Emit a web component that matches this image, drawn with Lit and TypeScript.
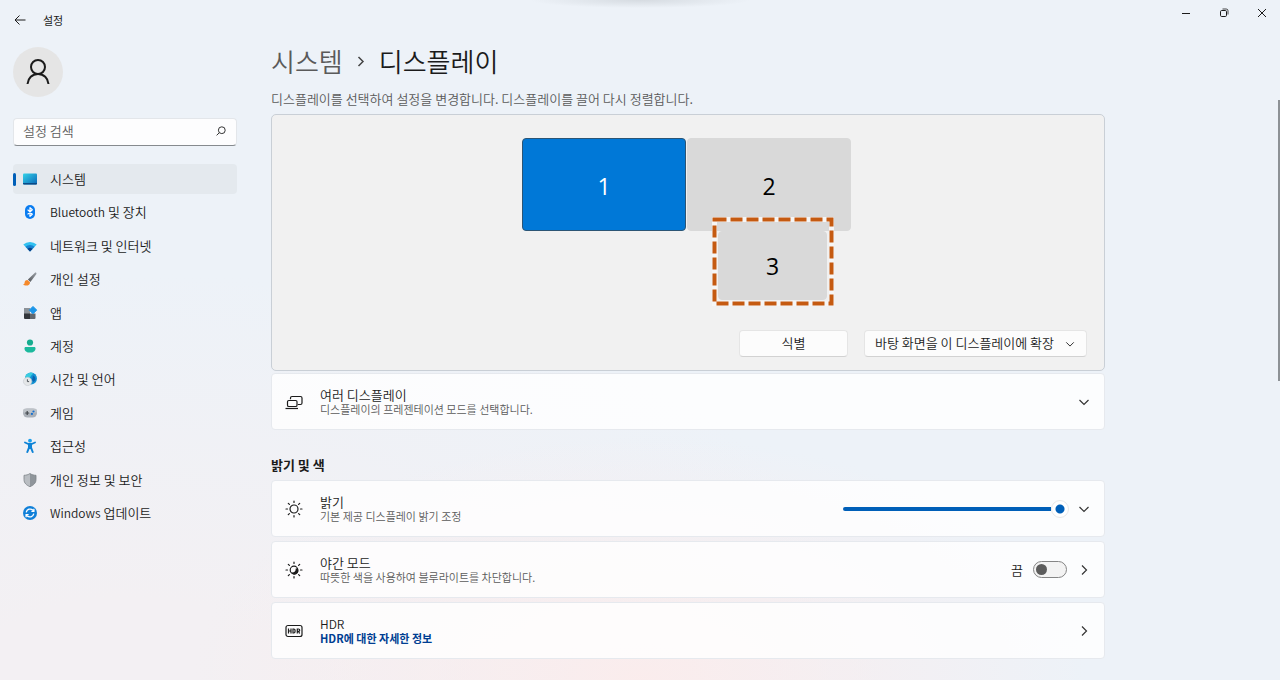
import { LitElement, html, svg, css } from "lit";
import { customElement, property, state } from "lit/decorators.js";
import { classMap } from "lit/directives/class-map.js";

const icons: Record<string, unknown> = {
  system: svg`<defs><linearGradient id="g" x1="0" y1="0" x2="1" y2="1"><stop offset="0" stop-color="#35d3e8"/><stop offset="1" stop-color="#0a66b8"/></linearGradient></defs>
    <rect x="1" y="2.5" width="14" height="11" rx="1" fill="url(#g)"/><path d="M1 12h14v.5a1 1 0 0 1-1 1H2a1 1 0 0 1-1-1z" fill="#0b4a86"/>`,
  bluetooth: svg`<rect x="3" y="1" width="10" height="14" rx="5" fill="#0a7cf0"/>
    <path d="M5.6 5.6 10.3 10.2 8 12.4V3.6l2.3 2.2L5.6 10.4" fill="none" stroke="#fff" stroke-width="1.2" stroke-linejoin="round"/>`,
  network: svg`<path d="M8 13.6 1.3 6.6a9.6 9.6 0 0 1 13.4 0z" fill="#32c1f0"/>
    <path d="M8 13.6 3.4 8.8a6.6 6.6 0 0 1 9.2 0z" fill="#1783d1"/><path d="M8 13.6 5.5 11a3.6 3.6 0 0 1 5 0z" fill="#0a3f86"/>`,
  personal: svg`<defs><linearGradient id="g" x1="1" y1="0" x2="0" y2="1"><stop offset="0" stop-color="#9aa0a6"/><stop offset="1" stop-color="#55585c"/></linearGradient></defs>
    <path d="M14.2 1.8c.5.5.3 1-.1 1.6L8.4 10.9 5.9 8.6 12.7 2c.5-.5 1.1-.6 1.5-.2z" fill="url(#g)"/>
    <path d="M5.4 8.9 8 11.2c.2 2.1-1.7 3.4-3.6 3.4-1.4 0-2.6-.3-3.4-1 1.5-.3 1.4-1.3 1.7-2.6.3-1.3 1.4-2.2 2.700-2.100z" fill="#f5892a"/>`,
  apps: svg`<path d="M2 3h6v6H2z" fill="#8c9298"/><path d="M2 8.500h6V14H3a1 1 0 0 1-1-1z" fill="#32363b"/>
    <path d="M8 8.500h5.500V13a1 1 0 0 1-1 1H8z" fill="#62676d"/><path d="m11 1.400 3.700 3.700L11 8.800 7.300 5.100z" fill="#1b95e8" stroke="#1b95e8" stroke-linejoin="round"/>`,
  account: svg`<circle cx="8" cy="4.500" r="3.100" fill="#16ac8f"/><path d="M2.500 10.400c0-.9.6-1.400 1.400-1.400h8.200c.8 0 1.400.5 1.400 1.400 0 2.500-2.300 4.200-5.500 4.200s-5.500-1.700-5.500-4.200z" fill="#1bb99d"/>`,
  time: svg`<circle cx="9" cy="7.500" r="6" fill="#1492d2"/><path d="M5 3a6 6 0 0 1 6-1.100c-.2 2-2.400 2.200-2.600 4L5.500 8 3 7c.1-1.800.8-3.100 2-4z" fill="#38cbe0"/>
    <path d="M11 4.500l2 1.500.500 3-2 2-1.500-2z" fill="#0a62b0"/>
    <circle cx="5.600" cy="10.400" r="4.200" fill="#e4e6e8" stroke="#bfc5ca" stroke-width=".5"/><path d="M5.400 8.300v2.300h1.700" fill="none" stroke="#50565c"/>`,
  game: svg`<rect x="1" y="3.500" width="14" height="9" rx="4.500" fill="#aab0b8"/><rect x="1" y="3.500" width="14" height="4.500" rx="3" fill="#bdc2c8"/>
    <path d="M5.200 6v4M3.200 8h4" stroke="#41464c" stroke-width="1.200"/><circle cx="11.500" cy="6.500" r="1.100" fill="#1670d0"/><circle cx="9.900" cy="8.900" r="1.100" fill="#1670d0"/>`,
  access: svg`<g fill="none" stroke="#0f83d6" stroke-linecap="round" stroke-linejoin="round"><path d="M3 4.500 6.300 6h3.400L13 4.500" stroke-width="1.900"/><path d="M7 6.500v3.200L5.300 14M9 6.500v3.200l1.700 4.300M8 6.500v3.500" stroke-width="2"/></g><circle cx="8" cy="2.700" r="1.900" fill="#1aa0ee"/>`,
  privacy: svg`<path d="M8 1.500c1.900 1.300 3.700 1.700 6 1.800v4.200c0 3.500-2.400 5.700-6 7.200z" fill="#8f959b"/><path d="M8 1.500C6.100 2.800 4.300 3.200 2 3.300v4.200c0 3.500 2.400 5.700 6 7.200z" fill="#b9bdc2"/>
    <path d="M8 1.500c1.900 1.300 3.700 1.700 6 1.800v4.200c0 3.500-2.400 5.700-6 7.200-3.600-1.500-6-3.700-6-7.200V3.300c2.300-.1 4.100-.5 6-1.800z" fill="none" stroke="#7b8187" stroke-width=".8"/>`,
  update: svg`<circle cx="8" cy="8" r="7" fill="#0f7fd8"/><g fill="none" stroke="#fff" stroke-width="1.300"><path d="M4.200 7.300A4 4 0 0 1 11 5.300l.7.8M11.800 8.700A4 4 0 0 1 5 10.700l-.7-.8"/><path d="M11.900 3.700v2.600H9.400M4.100 12.300V9.700h2.500"/></g>`,
};

const NAV = [
  ["system", "시스템"],
  ["bluetooth", "Bluetooth 및 장치"],
  ["network", "네트워크 및 인터넷"],
  ["personal", "개인 설정"],
  ["apps", "앱"],
  ["account", "계정"],
  ["time", "시간 및 언어"],
  ["game", "게임"],
  ["access", "접근성"],
  ["privacy", "개인 정보 및 보안"],
  ["update", "Windows 업데이트"],
];

// Latin words look oversized beside Hangul, so they get a smaller size.
const mixed = (text: string) =>
  text.split(/([A-Za-z]+)/).filter(Boolean).map((part) => (/^[A-Za-z]/.test(part) ? html`<span class="latin">${part}</span>` : part));

const rays = svg`<path d="M9 1v1.500M9 15.500V17M1 9h1.500M15.500 9H17M3.300 3.300l1.100 1.100M13.600 13.600l1.100 1.100M3.300 14.700l1.100-1.100M13.600 4.400l1.100-1.100" stroke-linecap="round"/>`;

const cardIcons: Record<string, unknown> = {
  multi: svg`<path d="M5.500 6.200V5A1.500 1.500 0 0 1 7 3.500h8.500A1.500 1.500 0 0 1 17 5v5a1.500 1.500 0 0 1-1.500 1.500h-2.700"/><rect x="2.500" y="7.500" width="9.500" height="6" rx="1.300"/><path d="M.500 15.500H13"/>`,
  sun: svg`<circle cx="9" cy="9" r="4"/>${rays}`,
  night: svg`<circle cx="9" cy="9" r="3.800"/><path d="M12.500 7.300A3.900 3.900 0 1 1 6 11.500c3 .6 5-1.200 4.700-4z" fill="#1b1b1b" stroke="none"/>${rays}`,
  hdr: svg`<rect x="1" y="3.500" width="16" height="11" rx="2"/><path d="M3.500 6.500v5M6 6.500v5M3.500 9H6M8 7v4h.8a1.200 1.200 0 0 0 1.200-1.200V8.200A1.200 1.200 0 0 0 8.800 7zM12.300 11.500V7h1.200a1.100 1.100 0 0 1 0 2.400h-1.200m1.300 0 1 2.100"/>`,
};

const chevron = (dir: "down" | "right") => html`<svg width="12" height="12" viewBox="0 0 12 12" fill="none" stroke="#333" stroke-width="1.2" aria-hidden="true">
  ${dir === "down" ? svg`<path d="M1.500 4 6 8.500 10.500 4"/>` : svg`<path d="M4 1.500 8.500 6 4 10.500"/>`}</svg>`;

@customElement("nav-icon")
class NavIcon extends LitElement {
  @property() name = "";
  static styles = css`
    :host { display: block; width: 16px; height: 16px; }
    svg { display: block; }
  `;
  render() {
    return html`<svg width="16" height="16" viewBox="0 0 16 16" aria-hidden="true">${icons[this.name]}</svg>`;
  }
}

@customElement("setting-card")
class SettingCard extends LitElement {
  @property() icon = "";
  @property() heading = "";
  @property() arrow: "down" | "right" = "down";
  static styles = css`
    :host {
      display: flex; align-items: center; box-sizing: border-box; min-height: 57px;
      padding: 0 8px 0 13px; background: rgba(255, 255, 255, 0.8);
      border: 1px solid #e6e9ee; border-radius: 4px;
    }
    .icon { flex: none; margin-right: 17px; stroke: #1b1b1b; stroke-width: 1.2; fill: none; }
    .text { flex: 1; min-width: 0; }
    .heading { margin: 0; font-size: 13px; font-weight: 350; line-height: 16px; color: #1b1b1b; }
    .latin { font-size: 12px; }
    .sub { font-size: 11px; line-height: 13px; color: #5a5a5a; }
    .actions { display: flex; align-items: center; }
    .more { display: grid; place-items: center; width: 24px; height: 24px; margin-left: 3px; padding: 0; border: 0; background: none; }
  `;
  render() {
    return html`
      <svg class="icon" width="18" height="18" viewBox="0 0 18 18" aria-hidden="true">${cardIcons[this.icon]}</svg>
      <div class="text">
        <h3 class="heading">${mixed(this.heading)}</h3>
        <div class="sub"><slot></slot></div>
      </div>
      <div class="actions"><slot name="action"></slot>
        <button class="more" aria-label=${this.heading}>${chevron(this.arrow)}</button>
      </div>`;
  }
}

@customElement("app-root")
class AppRoot extends LitElement {
  @state() private current = "system";
  @state() private level = 100;

  static styles = css`
    :host {
      display: flex; flex-direction: column; position: relative; box-sizing: border-box;
      min-height: 100vh; overflow: hidden; color: #1b1b1b;
      font: 350 13px/20px "Noto Sans CJK KR", "Noto Sans", sans-serif;
      background:
        radial-gradient(ellipse 110px 8px at 50% 0, rgba(190, 196, 202, 0.5), rgba(190, 196, 202, 0)),
        radial-gradient(ellipse 35% 36% at 50% 100%, rgba(251, 236, 236, 0.95), rgba(251, 236, 236, 0)),
        radial-gradient(ellipse 60% 60% at 10% 100%, #f3f0f3 20%, rgba(243, 240, 243, 0)),
        #edf2f8;
    }
    button, input, select { font: inherit; color: inherit; }
    .titlebar { display: flex; align-items: center; justify-content: space-between; height: 40px; }
    .left { display: flex; align-items: center; gap: 16px; padding-left: 13px; font-size: 11px; font-weight: 400; }
    .window { display: flex; gap: 2px; align-self: flex-start; }
    .plain { display: grid; place-items: center; padding: 0; border: 0; background: none; }
    .back { width: 14px; height: 20px; }
    .caption { width: 36px; height: 26px; }
    .caption svg, .back svg { fill: none; stroke: #1b1b1b; }
    .body { display: flex; gap: 34px; padding-left: 13px; }
    aside { flex: none; width: 224px; padding-top: 7px; }
    .avatar { display: grid; place-items: center; width: 50px; height: 50px; border-radius: 50%; background: #e5e5e5; }
    .avatar svg { fill: none; stroke: #1b1b1b; stroke-width: 2; }
    .search {
      display: flex; align-items: center; box-sizing: border-box; height: 28px; margin: 21px 0 18px;
      padding: 0 10px 2px 9px; background: #fdfdfe; border: 1px solid #e3e6ea;
      border-bottom-color: #868a8e; border-radius: 4px;
    }
    .search input { flex: 1; min-width: 0; padding: 0; border: 0; outline: 0; background: none; line-height: 20px; }
    .search input::placeholder { color: #5d5d5d; opacity: 1; }
    .search svg { fill: none; stroke: #333; }
    .nav { display: flex; flex-direction: column; justify-content: space-between; height: 364px; }
    .item {
      display: flex; align-items: center; gap: 12px; position: relative; height: 30px;
      padding: 0 9px; border-radius: 4px; color: inherit; text-decoration: none;
    }
    .latin { font-size: 12px; }
    .item.active { background: #e4e9ee; }
    .item.active::before {
      content: ""; position: absolute; left: 0; top: 9px; width: 3px; height: 13px;
      border-radius: 2px; background: #005fb8;
    }
    main { flex: 1; min-width: 0; max-width: 834px; }
    .crumbs { display: flex; align-items: center; gap: 14px; margin: 3px 0 0; font-size: 26px; line-height: 36px; }
    .crumbs h1 { margin: 0; font: inherit; }
    .crumbs a { color: #5a5a5a; text-decoration: none; }
    .crumbs svg { fill: none; stroke: #444; stroke-width: 1.5; }
    .hint { margin: 10px 0 5px; color: #5a5a5a; }
    .panel {
      display: flex; flex-direction: column; justify-content: space-between; align-items: center;
      box-sizing: border-box; min-height: 257px; padding: 23px 17px 13px; margin-bottom: 2px;
      background: #f1f1f1; border: 1px solid #c9cfd6; border-radius: 5px;
    }
    .arrangement { position: relative; width: 332px; height: 168px; }
    .screen {
      position: absolute; box-sizing: border-box; border: 1px solid #d9d9d9; border-radius: 4px; background: #d9d9d9;
      color: #000; font: 23px/30px "Open Sans", "Noto Sans", sans-serif; padding: 2px 0 0;
    }
    .one { left: 0; top: 0; width: 164px; height: 93px; background: #0078d7; border-color: #2c5575; color: #fff; }
    .two { left: 165px; top: 0; width: 164px; height: 93px; }
    .three { left: 196px; top: 93px; width: 109px; height: 69px; padding: 0; }
    .marker { position: absolute; left: 189px; top: 78px; fill: none; pointer-events: none; }
    .controls { display: flex; align-self: stretch; justify-content: flex-end; gap: 16px; }
    .btn, .picker select {
      box-sizing: border-box; height: 27px; border: 1px solid #e5e5e5; border-bottom-color: #d2d2d2;
      border-radius: 4px; background: #fcfcfc; line-height: 20px;
    }
    .btn { width: 109px; padding: 0 0 2px; }
    .picker { display: grid; align-items: center; position: relative; }
    .picker select { width: 223px; padding: 0 28px 2px 10px; appearance: none; }
    .picker svg { position: absolute; right: 12px; width: 10px; height: 10px; pointer-events: none; }
    .section { margin: 25px 0 5px; font-size: 13px; line-height: 20px; font-weight: 700; }
    .group { display: grid; gap: 4px; }
    .slider { appearance: none; width: 226px; height: 20px; margin: 0; background: none; }
    .slider::-webkit-slider-runnable-track { height: 4px; border-radius: 2px; background: linear-gradient(#005fb8, #005fb8) 0 0 / 208px 4px no-repeat; }
    .slider::-webkit-slider-thumb {
      appearance: none; box-sizing: border-box; width: 18px; height: 18px; margin-top: -7px; border: 1px solid #e9e9e9;
      border-radius: 50%; background: radial-gradient(circle, #005fb8 4px, #fff 5px);
    }
    .toggle { display: flex; align-items: center; gap: 10px; margin-right: 2px; }
    .toggle input {
      appearance: none; display: flex; align-items: center; box-sizing: border-box; width: 34px; height: 17px;
      margin: 0; padding: 0 2px; border: 1px solid #858585; border-radius: 9px; background: #f3f3f3;
    }
    .toggle input::before { content: ""; width: 11px; height: 11px; border-radius: 50%; background: #5c5c5c; }
    .toggle input:checked { justify-content: flex-end; background: #005fb8; }
    .learn { color: #003e92; font-weight: 700; text-decoration: none; }
    .scrollbar { position: absolute; right: 0; top: 100px; width: 2px; height: 281px; background: #8d9296; }
  `;

  render() {
    return html`
      <header class="titlebar">
        <div class="left">
          <button class="plain back" aria-label="뒤로"><svg width="12" height="12" viewBox="0 0 12 12"><path d="M11.500 6H1M5.500 1.500 1 6l4.500 4.500"/></svg></button>
          <span>설정</span>
        </div>
        <div class="window">
          <button class="plain caption" aria-label="최소화"><svg width="10" height="10" viewBox="0 0 10 10"><path d="M1 5.500h8"/></svg></button>
          <button class="plain caption" aria-label="이전 크기로"><svg width="10" height="10" viewBox="0 0 10 10"><rect x="1.500" y="2.500" width="6" height="6" rx="1.200"/><path d="M3.500 1h3.700A1.800 1.800 0 0 1 9 2.800V6.500" stroke-width=".8"/></svg></button>
          <button class="plain caption" aria-label="닫기"><svg width="10" height="10" viewBox="0 0 10 10"><path d="m1 1 8 8M9 1 1 9"/></svg></button>
        </div>
      </header>
      <div class="body">
        <aside>
          <div class="avatar"><svg width="26" height="28" viewBox="0 0 26 28"><circle cx="13" cy="9" r="7"/><path d="M2.500 26c.5-5.900 4.700-10 10.500-10s10 4.100 10.500 10"/></svg></div>
          <label class="search">
            <input type="text" placeholder="설정 검색" aria-label="설정 검색" />
            <svg width="10" height="10" viewBox="0 0 10 10"><circle cx="5.800" cy="4.200" r="3.400"/><path d="M3.300 6.700.6 9.400"/></svg>
          </label>
          <nav class="nav">
            ${NAV.map(([id, label]) => html`<a href="#${id}" class=${classMap({ item: true, active: id === this.current })}
              @click=${() => (this.current = id)}><nav-icon name=${id}></nav-icon><span>${mixed(label)}</span></a>`)}
          </nav>
        </aside>
        <main>
          <div class="crumbs">
            <a href="#system">시스템</a>
            <svg width="8" height="12" viewBox="0 0 8 12"><path d="M1.500 2 6 6.500 1.500 11"/></svg>
            <h1>디스플레이</h1>
          </div>
          <p class="hint">디스플레이를 선택하여 설정을 변경합니다. 디스플레이를 끌어 다시 정렬합니다.</p>
          <section class="panel">
            <div class="arrangement">
              <button class="screen one">1</button>
              <button class="screen two">2</button>
              <button class="screen three">3</button>
              <svg class="marker" width="124" height="92" viewBox="0 0 124 92">
                <rect x="3.500" y="3.500" width="117" height="84" stroke="#f6f6f6" stroke-width="5"/>
                <path d="M3.500 3.500h117v84H3.500z" stroke="#c55a11" stroke-width="4" stroke-dasharray="12 4"/>
              </svg>
            </div>
            <div class="controls">
              <button class="btn">식별</button>
              <label class="picker">
                <select aria-label="여러 디스플레이"><option>바탕 화면을 이 디스플레이에 확장</option></select>
                ${chevron("down")}
              </label>
            </div>
          </section>
          <setting-card icon="multi" heading="여러 디스플레이">디스플레이의 프레젠테이션 모드를 선택합니다.</setting-card>
          <h2 class="section">밝기 및 색</h2>
          <div class="group">
            <setting-card icon="sun" heading="밝기">기본 제공 디스플레이 밝기 조정
              <input slot="action" class="slider" type="range" aria-label="밝기" .value=${String(this.level)} />
            </setting-card>
            <setting-card icon="night" heading="야간 모드" arrow="right">따뜻한 색을 사용하여 블루라이트를 차단합니다.
              <label slot="action" class="toggle">끔<input type="checkbox" role="switch" /></label>
            </setting-card>
            <setting-card icon="hdr" heading="HDR" arrow="right"><a class="learn" href="#hdr">HDR에 대한 자세한 정보</a></setting-card>
          </div>
        </main>
      </div>
      <div class="scrollbar"></div>`;
  }
}
